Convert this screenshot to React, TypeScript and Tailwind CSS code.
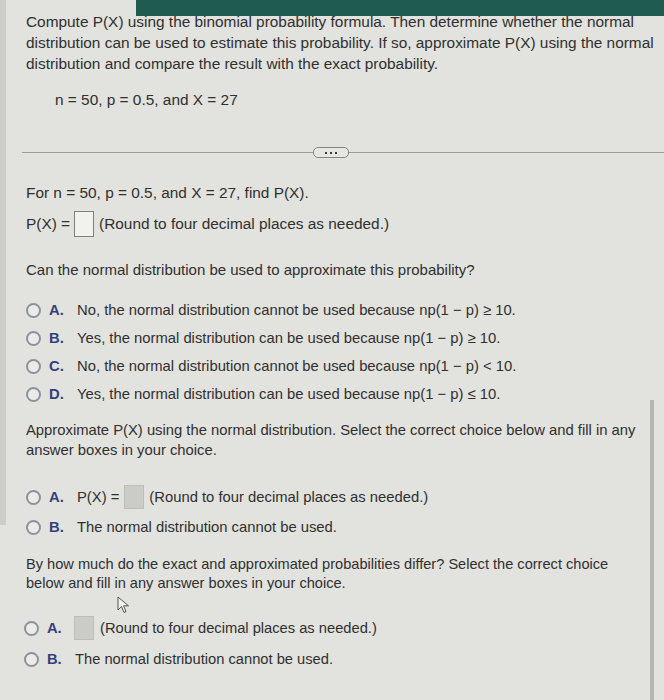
import React from "react";

function Radio() {
  return (
    <span className="inline-block w-[15px] h-[15px] rounded-full border-2 border-[#8d929e] bg-[#ebebe8] shrink-0" />
  );
}

function Letter({ l }: { l: string }) {
  return <span className="ml-[8px] w-[28px] shrink-0 font-bold text-[#33407c]">{l}.</span>;
}

function Option({ letter, h, children }: { letter: string; h: string; children: React.ReactNode }) {
  return (
    <div className={"flex items-center " + h}>
      <Radio />
      <Letter l={letter} />
      <span className="flex items-center whitespace-nowrap">{children}</span>
    </div>
  );
}

export default function App() {
  return (
    <div
      className="relative w-[664px] h-[700px] overflow-hidden bg-[#e2e2de] text-[#303030]"
      style={{ fontFamily: '"Liberation Sans", Arial, sans-serif' }}
    >
      <div className="absolute top-0 left-[136px] right-0 h-[16px] bg-[#1f5c4f]" />
      <div className="absolute left-0 top-0 w-[6px] h-[525px] bg-[#cdcdc9]" />
      <div className="absolute right-[10px] top-[400px] w-[4px] h-[300px] bg-[#b6b6b2]" />

      <div className="pl-[26px] pt-[11px] text-[15.4px] leading-[21px]">
        <p>
          Compute P(X) using the binomial probability formula. Then determine whether the normal distribution can be used to estimate this probability. If so, approximate P(X) using the normal distribution and compare the result with the exact probability.
        </p>
        <p className="mt-[16px] ml-[29px] leading-[20px]">n = 50, p = 0.5, and X = 27</p>
      </div>

      <div className="relative mt-[42px] ml-[22px] h-[1px] bg-[#9c9c98]">
        <div className="absolute left-[291px] -top-[5px] w-[36px] h-[11px] rounded-[5px] border border-[#86867f] bg-[#e6e6e2] flex items-center justify-center gap-[3px]">
          <span className="w-[2px] h-[2px] bg-[#3a3a3a]" />
          <span className="w-[2px] h-[2px] bg-[#3a3a3a]" />
          <span className="w-[2px] h-[2px] bg-[#3a3a3a]" />
        </div>
      </div>

      <div className="pl-[26px] w-[646px]">
        <p className="mt-[30px] text-[15.4px] leading-[20px]">For n = 50, p = 0.5, and X = 27, find P(X).</p>
        <div className="mt-[7px] h-[28px] flex items-center text-[15.4px]">
          <span>P(X) =</span>
          <span className="ml-[4px] w-[20px] h-[26px] border border-[#80807c] bg-[#f1f1ee]" />
          <span className="ml-[5px]">(Round to four decimal places as needed.)</span>
        </div>
        <p className="mt-[22px] text-[15px] leading-[20px]">Can the normal distribution be used to approximate this probability?</p>

        <div className="mt-[16px] text-[14.8px]">
          <Option letter="A" h="h-[28px]">No, the normal distribution cannot be used because np(1 − p) ≥ 10.</Option>
          <Option letter="B" h="h-[28px]">Yes, the normal distribution can be used because np(1 − p) ≥ 10.</Option>
          <Option letter="C" h="h-[28px]">No, the normal distribution cannot be used because np(1 − p) &lt; 10.</Option>
          <Option letter="D" h="h-[28px]">Yes, the normal distribution can be used because np(1 − p) ≤ 10.</Option>
        </div>

        <p className="mt-[12px] w-[615px] text-[14.8px] leading-[20px]">
          Approximate P(X) using the normal distribution. Select the correct choice below and fill in any answer boxes in your choice.
        </p>

        <div className="mt-[22px] text-[14.8px]">
          <Option letter="A" h="h-[30px]">
            <span>P(X) =</span>
            <span className="ml-[5px] w-[20px] h-[24px] border border-[#bdbdb9] bg-[#cbcbc7]" />
            <span className="ml-[5px]">(Round to four decimal places as needed.)</span>
          </Option>
          <Option letter="B" h="h-[30px]">The normal distribution cannot be used.</Option>
        </div>

        <p className="mt-[13px] w-[615px] text-[14.6px] leading-[19px]">
          By how much do the exact and approximated probabilities differ? Select the correct choice below and fill in any answer boxes in your choice.
        </p>

        <div className="mt-[20px] -ml-[2px] text-[14.7px]">
          <Option letter="A" h="h-[30px]">
            <span className="-ml-[1px] w-[20px] h-[24px] border border-[#bdbdb9] bg-[#cbcbc7]" />
            <span className="ml-[6px]">(Round to four decimal places as needed.)</span>
          </Option>
          <Option letter="B" h="h-[32px]">The normal distribution cannot be used.</Option>
        </div>
      </div>

      <svg className="absolute left-[117px] top-[596px]" width="14" height="18" viewBox="0 0 14 18">
        <path d="M1 1 L1 14 L4.5 10.5 L7 16.5 L9 15.5 L6.6 9.8 L11.5 9.8 Z" fill="#f2f2f2" stroke="#555" strokeWidth="1" />
      </svg>
    </div>
  );
}
